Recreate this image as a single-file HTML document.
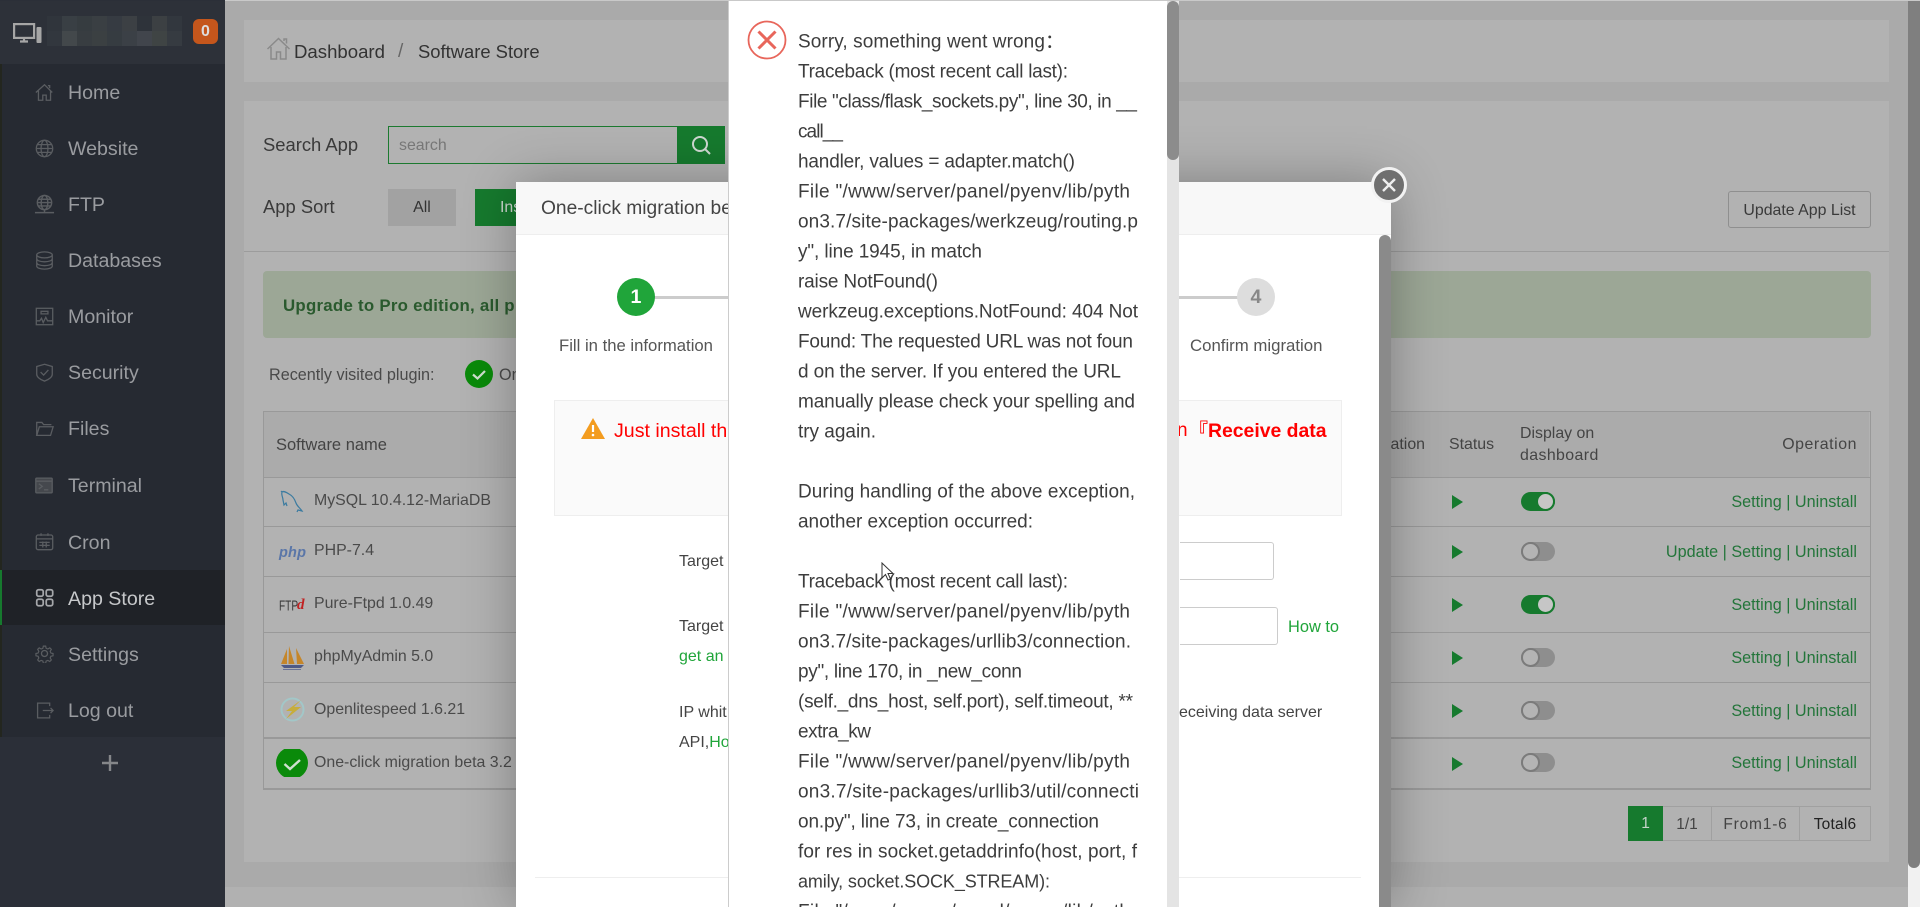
<!DOCTYPE html>
<html><head><meta charset="utf-8"><title>Software Store</title>
<style>
html,body{margin:0;padding:0;width:1920px;height:907px;overflow:hidden;background:#aaa}
body{position:relative;font-family:"Liberation Sans","Noto Sans CJK SC",sans-serif;color:#333}
.a{position:absolute}
.t{position:absolute;white-space:nowrap;line-height:24px;height:24px}
.nav{color:#9a9ca0;font-size:19.6px;left:68px}
.ic{position:absolute;left:35px;width:19px;height:19px;fill:none;stroke:#5a5d61;stroke-width:1.5}
.row{color:#4a4a4a;font-size:15.9px;left:314px}
.op{color:#23753a;font-size:16.2px;right:63px}
.play{position:absolute;left:1452px;width:0;height:0;border-left:11px solid #167a2e;border-top:7px solid transparent;border-bottom:7px solid transparent}
.tg{position:absolute;left:1521px;width:34px;height:19px;border-radius:10px;background:#8e8e8e}
.tg i{position:absolute;left:0;top:0;width:15px;height:15px;border:2px solid #7b7b7b;border-radius:50%;background:#b4b4b4}
.tg.on{background:#167a2e}
.tg.on i{left:15px;border-color:#167a2e;background:#c6c6c6}
.h{position:absolute;left:264px;width:1115px;height:1px;background:#999}
.h2{position:absolute;left:1391px;width:479px;height:1px;background:#999}
.m{color:#444;font-size:16px}
#err text{font-size:19px;fill:#3d3d3d}
</style></head><body>

<!-- top strip -->
<div class="a" style="left:0;top:0;width:1920px;height:1px;background:#c9c9c9"></div>

<!-- sidebar -->
<div class="a" style="left:0;top:0;width:225px;height:907px;background:#2b2f38"></div>
<div class="a" style="left:0;top:1px;width:225px;height:63px;background:#2d3139"></div>
<div class="a" style="left:0;top:64px;width:225px;height:673px;background:#262a32"></div>
<div class="a" style="left:0;top:64px;width:2px;height:673px;background:#23261f"></div>
<div class="a" style="left:0;top:570px;width:225px;height:55px;background:#1f2227"></div>
<div class="a" style="left:0;top:570px;width:2px;height:55px;background:#167a2e"></div>

<!-- logo -->
<svg class="a" style="left:13px;top:23px" width="29" height="21" viewBox="0 0 29 21" fill="none" stroke="#a6a6a6" stroke-width="2.200"><rect x="1.100" y="1.100" width="20" height="13.800"/><path d="M7 18.500h8M11 15v3"/><rect x="23.500" y="4" width="5" height="16" rx="1" fill="#a6a6a6" stroke="none"/></svg>
<!-- mosaic -->
<div class="a" style="left:47px;top:16px;width:135px;height:30px;display:grid;grid-template-columns:repeat(9,15px);grid-template-rows:15px 15px">
<i style="background:#30353c"></i><i style="background:#393f44"></i><i style="background:#363c40"></i><i style="background:#3a3f43"></i><i style="background:#363b42"></i><i style="background:#3c4044"></i><i style="background:#2e333a"></i><i style="background:#3c4043"></i><i style="background:#32373e"></i>
<i style="background:#32373e"></i><i style="background:#43484b"></i><i style="background:#383d41"></i><i style="background:#3b4042"></i><i style="background:#363c41"></i><i style="background:#3b4046"></i><i style="background:#41454c"></i><i style="background:#3f4444"></i><i style="background:#363b41"></i>
</div>
<div class="a" style="left:193px;top:19px;width:25px;height:25px;background:#c4561c;border-radius:6px;color:#ddd;font-weight:bold;font-size:16px;line-height:25px;text-align:center">0</div>

<!-- nav -->
<svg class="ic" style="top:83px" viewBox="0 0 22 22"><path d="M1 11 11 2l9 9M4 9v11h5v-6h4v6h5V9M15 3h2v3"/></svg>
<span class="t nav" style="top:81px">Home</span>
<svg class="ic" style="top:139px" viewBox="0 0 22 22"><circle cx="11" cy="11" r="9.500"/><ellipse cx="11" cy="11" rx="4" ry="9.500"/><path d="M2 11h18M3 6.500h16M3 15.500h16"/></svg>
<span class="t nav" style="top:137px">Website</span>
<svg class="ic" style="left:34px;top:194px;width:21px;height:21px" viewBox="0 0 22 22"><circle cx="11" cy="9" r="7.500"/><ellipse cx="11" cy="9" rx="3.500" ry="7.500"/><path d="M3.500 9h15M4 5.500h14M4 12.500h14M1 19.500h20M11 16.500v3"/></svg>
<span class="t nav" style="top:193px">FTP</span>
<svg class="ic" style="top:251px" viewBox="0 0 22 22"><ellipse cx="11" cy="4.500" rx="9" ry="3.500"/><path d="M2 4.500v13c0 2 4 3.500 9 3.500s9-1.500 9-3.500v-13M2 9c0 2 4 3.500 9 3.500s9-1.500 9-3.500M2 13.500c0 2 4 3.500 9 3.500s9-1.500 9-3.500"/></svg>
<span class="t nav" style="top:249px">Databases</span>
<svg class="ic" style="top:307px" viewBox="0 0 22 22"><rect x="1.500" y="1.500" width="19" height="19"/><path d="M1.500 16h4l2-3 2 5 3-6 2 4h6M7 5h8v3H7z"/></svg>
<span class="t nav" style="top:305px">Monitor</span>
<svg class="ic" style="top:362px;height:21px" viewBox="0 0 22 22"><path d="M11 1.500 20 4v9c0 3.500-4 6-9 8-5-2-9-4.500-9-8V4z"/><path d="M6.500 10.500 10 14l5.500-6"/></svg>
<span class="t nav" style="top:361px">Security</span>
<svg class="ic" style="top:419px" viewBox="0 0 22 22"><path d="M2 19V4h6l2 2.500h9M2 19h16l3-10H5z"/></svg>
<span class="t nav" style="top:417px">Files</span>
<svg class="ic" style="left:34px;top:476px;width:20px" viewBox="0 0 22 22"><rect x="1.500" y="2.500" width="19" height="17" rx="1" fill="#45484d"/><path d="M5 9l4 3-4 3M11 16h5M2 6h18"/></svg>
<span class="t nav" style="top:474px">Terminal</span>
<svg class="ic" style="top:532px" viewBox="0 0 22 22"><rect x="1.500" y="3.500" width="19" height="17" rx="2"/><path d="M7 1.500v3M15 1.500v3M1.500 8h19M5 12h12M5 15.500h12M9 11v7M13 11v7"/></svg>
<span class="t nav" style="top:531px">Cron</span>
<svg class="ic" style="top:588px;stroke:#a5a7aa;stroke-width:2" viewBox="0 0 22 22"><rect x="2" y="2" width="7.500" height="7.500" rx="2"/><rect x="13" y="2" width="7.500" height="7.500" rx="2"/><rect x="2" y="13" width="7.500" height="7.500" rx="2"/><rect x="13" y="13" width="7.500" height="7.500" rx="2"/></svg>
<span class="t nav" style="top:587px;color:#c6c8ca">App Store</span>
<svg class="ic" style="top:644px" viewBox="0 0 22 22"><circle cx="11" cy="11" r="3.500"/><path d="M9.500 1.500h3l.6 2.800 2.200.9 2.500-1.500 2 2-1.500 2.500.9 2.200 2.800.6v3l-2.800.6-.9 2.200 1.500 2.500-2 2-2.500-1.500-2.200.9-.6 2.800h-3l-.6-2.800-2.200-.9-2.500 1.500-2-2 1.500-2.500-.9-2.200-2.800-.6v-3l2.800-.6.9-2.200-1.500-2.500 2-2 2.500 1.500 2.200-.9z" transform="translate(1.100 1.100) scale(.9)"/></svg>
<span class="t nav" style="top:643px">Settings</span>
<svg class="ic" style="top:701px" viewBox="0 0 22 22"><path d="M17 6V2.500H3v17h14V16M9 11h12M18 8l3 3-3 3"/></svg>
<span class="t nav" style="top:699px">Log out</span>
<svg class="a" style="left:101px;top:754px" width="18" height="18" viewBox="0 0 18 18"><path d="M9 1v16M1 9h16" stroke="#85878a" stroke-width="2.400"/></svg>

<!-- main -->
<div class="a" style="left:225px;top:1px;width:1683px;height:886px;background:#aaa"></div>
<div class="a" style="left:225px;top:887px;width:1683px;height:20px;background:#b1b1b1"></div>

<!-- breadcrumb -->
<div class="a" style="left:244px;top:20px;width:1645px;height:62px;background:#b2b2b2"></div>
<svg class="a" style="left:266px;top:36px" width="25" height="25" viewBox="0 0 25 25" fill="none" stroke="#8a8a8a" stroke-width="1.500"><path d="M1.500 13 12.500 2.500l11 10.500M5 11v12h5.500v-7h4v7H20V11M18 5V3h2.500v4.500"/></svg>
<span class="t" style="left:294px;top:40px;font-size:18.6px;color:#333">Dashboard</span>
<span class="t" style="left:398px;top:40px;font-size:19px;color:#666">/</span>
<span class="t" style="left:418px;top:40px;font-size:18.4px;color:#333">Software Store</span>

<!-- card -->
<div class="a" style="left:244px;top:101px;width:1645px;height:761px;background:#b2b2b2"></div>
<div class="a" style="left:244px;top:251px;width:1645px;height:1px;background:#9c9c9c"></div>

<span class="t" style="left:263px;top:133px;font-size:18.4px;color:#3a3a3a">Search App</span>
<div class="a" style="left:388px;top:126px;width:289px;height:36px;border:1px solid #1c7a30;background:#b2b2b2"></div>
<span class="t" style="left:399px;top:134px;font-size:15.9px;color:#777">search</span>
<div class="a" style="left:677px;top:126px;width:48px;height:38px;background:#167a2e"></div>
<svg class="a" style="left:690px;top:134px" width="22" height="22" viewBox="0 0 22 22" fill="none" stroke="#cfd8d1" stroke-width="2"><circle cx="10" cy="10" r="7"/><path d="M15 15l5 5"/></svg>
<span class="t" style="left:263px;top:195px;font-size:18.4px;color:#3a3a3a">App Sort</span>
<div class="a" style="left:388px;top:189px;width:68px;height:37px;background:#a2a2a2;text-align:center;line-height:37px;font-size:15.9px;color:#333">All</div>
<div class="a" style="left:475px;top:189px;width:60px;height:37px;background:#167a2e;line-height:37px;font-size:15.9px;color:#cfd8d1;padding-left:25px">Installed</div>
<div class="a" style="left:1728px;top:191px;width:141px;height:35px;border:1px solid #8f8f8f;border-radius:3px;text-align:center;line-height:37px;font-size:15.9px;color:#3a3a3a">Update App List</div>

<div class="a" style="left:263px;top:271px;width:1608px;height:67px;background:#9ca796;border-radius:4px"></div>
<span class="t" style="left:283px;top:294px;font-size:16.85px;font-weight:bold;color:#2a5a2e;letter-spacing:.25px">Upgrade to Pro edition, all p</span>

<span class="t" style="left:269px;top:363px;font-size:16.2px;color:#4a4a4a">Recently visited plugin:</span>
<svg class="a" style="left:465px;top:360px" width="28" height="28" viewBox="0 0 28 28"><circle cx="14" cy="14" r="14" fill="#0a8a0a"/><path d="M8 14.500l4.500 4L20 11" fill="none" stroke="#cfe0cf" stroke-width="2.200"/></svg>
<span class="t" style="left:499px;top:363px;font-size:16.2px;color:#4a4a4a">On</span>

<!-- table -->
<div class="a" style="left:263px;top:411px;width:1606px;height:376px;border:1px solid #999;border-bottom:2px solid #999"></div>
<div class="a" style="left:264px;top:412px;width:1605px;height:65px;background:#ababab"></div>
<div class="h" style="top:477px"></div><div class="h2" style="top:477px"></div>
<div class="h" style="top:526px"></div><div class="h2" style="top:526px"></div>
<div class="h" style="top:576px"></div><div class="h2" style="top:576px"></div>
<div class="h" style="top:632px"></div><div class="h2" style="top:632px"></div>
<div class="h" style="top:682px"></div><div class="h2" style="top:682px"></div>
<div class="h" style="top:737px;height:2px"></div><div class="h2" style="top:737px;height:2px"></div>

<span class="t" style="left:276px;top:433px;font-size:16.5px;color:#444">Software name</span>
<span class="t" style="left:1391px;top:433px;width:34px;overflow:hidden;font-size:15.9px;color:#444;direction:rtl">ation</span>
<span class="t" style="left:1449px;top:433px;font-size:15.9px;color:#444">Status</span>
<span class="t" style="left:1520px;top:422px;font-size:15.9px;color:#444">Display on</span>
<span class="t" style="left:1520px;top:444px;font-size:15.9px;color:#444;letter-spacing:.4px">dashboard</span>
<span class="t" style="right:63px;top:433px;font-size:15.9px;color:#444;letter-spacing:.55px">Operation</span>

<span class="t row" style="top:489px">MySQL 10.4.12-MariaDB</span>
<span class="t row" style="top:539px">PHP-7.4</span>
<span class="t row" style="top:592px">Pure-Ftpd 1.0.49</span>
<span class="t row" style="top:645px">phpMyAdmin 5.0</span>
<span class="t row" style="top:698px">Openlitespeed 1.6.21</span>
<span class="t row" style="top:751px">One-click migration beta 3.2</span>

<!-- row icons -->
<svg class="a" style="left:280px;top:490px" width="24" height="23" viewBox="0 0 24 23" fill="none" stroke="#3b7ba0" stroke-width="1.200"><path d="M2 2c1-1 4 0 7 2 4 2 6 6 7 9 1 3 4 5 6 8l-4-1-1 2M2 2c-1 3 1 5 1 8l1 5 2-2 1 3M2 2l-1-1"/></svg>
<span class="t" style="left:279px;top:541px;font-size:14.5px;font-weight:bold;font-style:italic;color:#5a76a8;letter-spacing:.2px">php</span>
<span class="t" style="left:279px;top:593px;width:20px;font-size:14px;color:#3a3a3a;transform-origin:left;transform:scale(.72,1.05)">FTP</span>
<span class="t" style="left:297px;top:593px;font-size:15px;font-style:italic;font-weight:bold;color:#c02020;font-family:'Liberation Serif',serif">d</span>
<svg class="a" style="left:280px;top:646px" width="25" height="25" viewBox="0 0 25 25"><path d="M7 3 1 18h6zM9 0 8.500 18h6zM16 2l1 16h7z" fill="#c5862a"/><path d="M1 19h23l-3 3H4z" fill="#4f5a86"/><path d="M3 23.500h18" stroke="#6a7396"/></svg>
<svg class="a" style="left:280px;top:697px" width="25" height="25" viewBox="0 0 25 25"><circle cx="12.500" cy="12.500" r="11" fill="none" stroke="#a2c7c8" stroke-width="2"/><path d="M21 3 6 14h6L6 22 21 10h-7z" fill="#c7ad3b"/></svg>
<svg class="a" style="left:276px;top:749px" width="32" height="28" viewBox="0 0 32 28"><circle cx="16" cy="14" r="16" fill="#0a8a0a"/><path d="M8.500 15l5.500 5 10-9" fill="none" stroke="#cfe0cf" stroke-width="2.400"/></svg>

<!-- play, toggles, ops -->
<div class="play" style="top:495px"></div><div class="tg on" style="top:492px"><i></i></div>
<span class="t op" style="top:490px">Setting | Uninstall</span>
<div class="play" style="top:545px"></div><div class="tg" style="top:542px"><i></i></div>
<span class="t op" style="top:540px">Update | Setting | Uninstall</span>
<div class="play" style="top:598px"></div><div class="tg on" style="top:595px"><i></i></div>
<span class="t op" style="top:593px">Setting | Uninstall</span>
<div class="play" style="top:651px"></div><div class="tg" style="top:648px"><i></i></div>
<span class="t op" style="top:646px">Setting | Uninstall</span>
<div class="play" style="top:704px"></div><div class="tg" style="top:701px"><i></i></div>
<span class="t op" style="top:699px">Setting | Uninstall</span>
<div class="play" style="top:757px"></div><div class="tg" style="top:753px"><i></i></div>
<span class="t op" style="top:751px">Setting | Uninstall</span>

<!-- pagination -->
<div class="a" style="left:1628px;top:806px;width:243px;height:35px;display:flex;font-size:15.5px;line-height:35px;text-align:center;color:#444;box-sizing:border-box">
<div style="width:35px;background:#167a2e;color:#c6d4ca;line-height:35px">1</div>
<div style="width:49px;border:1px solid #a0a0a0;border-left:0;box-sizing:border-box">1/1</div>
<div style="width:88px;border:1px solid #a0a0a0;border-left:0;box-sizing:border-box;letter-spacing:.8px">From1-6</div>
<div style="width:71px;border:1px solid #a0a0a0;border-left:0;box-sizing:border-box;color:#222;letter-spacing:.2px">Total6</div>
</div>

<!-- page scrollbar -->
<div class="a" style="left:1908px;top:1px;width:12px;height:906px;background:#f1f1f1"></div>
<div class="a" style="left:1908px;top:1px;width:12px;height:867px;background:#7f7f7f;border-radius:0 0 6px 6px"></div>

<!-- migration modal -->
<div class="a" style="left:516px;top:182px;width:875px;height:725px;background:#fff;box-shadow:1px 1px 50px rgba(0,0,0,.3)"></div>
<div class="a" style="left:516px;top:182px;width:875px;height:52px;background:#f8f8f8;border-bottom:1px solid #eee"></div>
<span class="t" style="left:541px;top:197px;font-size:19.2px;color:#444">One-click migration beta</span>
<div class="a" style="left:1379px;top:235px;width:12px;height:672px;background:#8a8a8a;border-radius:6px 6px 0 0"></div>

<div class="a" style="left:636px;top:296px;width:620px;height:3px;background:#ccc"></div>
<div class="a" style="left:617px;top:278px;width:38px;height:38px;border-radius:50%;background:#20a53a;color:#fff;font-weight:bold;font-size:19.600px;line-height:38px;text-align:center">1</div>
<div class="a" style="left:1237px;top:278px;width:38px;height:38px;border-radius:50%;background:#ddd;color:#888;font-weight:bold;font-size:19.600px;line-height:38px;text-align:center">4</div>
<span class="t" style="left:559px;top:334px;font-size:16.7px;color:#555">Fill in the information</span>
<span class="t" style="left:1190px;top:334px;font-size:16.8px;color:#555">Confirm migration</span>

<div class="a" style="left:554px;top:400px;width:786px;height:114px;background:#fafafa;border:1px solid #eee"></div>
<svg class="a" style="left:581px;top:418px" width="24" height="21" viewBox="0 0 24 21"><path d="M12 0 24 21H0z" fill="#f39c1f"/><path d="M12 7v7" stroke="#fff" stroke-width="2.200"/><circle cx="12" cy="17" r="1.300" fill="#fff"/></svg>
<span class="t" style="left:614px;top:419px;font-size:19.6px;color:#f00">Just install the</span>
<span class="t" style="left:1177px;top:419px;font-size:19px;color:#f00">n</span>
<span class="t" style="left:1188.600px;top:419px;font-size:19.4px;font-weight:bold;color:#f00">『Receive data</span>

<span class="t m" style="left:679px;top:550px">Target</span>
<span class="t m" style="left:679px;top:615px">Target</span>
<span class="t m" style="left:679px;top:645px;color:#20a53a">get an</span>
<span class="t m" style="left:679px;top:701px">IP whit</span>
<span class="t m" style="left:679px;top:731px">API,<span style="color:#20a53a">Ho</span></span>
<div class="a" style="left:1180px;top:542px;width:93px;height:36px;border:1px solid #ccc;border-left:0;border-radius:0 3px 3px 0"></div>
<div class="a" style="left:1180px;top:607px;width:97px;height:36px;border:1px solid #ccc;border-left:0;border-radius:0 3px 3px 0"></div>
<span class="t m" style="left:1288px;top:615px;color:#20a53a;font-size:16.4px">How to</span>
<span class="t m" style="left:1179px;top:701px">eceiving data server</span>
<div class="a" style="left:535px;top:877px;width:826px;height:1px;background:#eee"></div>

<!-- close -->
<div class="a" style="left:1371px;top:167px;width:36px;height:36px;box-sizing:border-box;border:3px solid #f2f2f2;border-radius:50%;background:#6f6f6f"></div>
<svg class="a" style="left:1381px;top:177px" width="16" height="16" viewBox="0 0 16 16"><path d="M2 2l12 12M14 2 2 14" stroke="#eee" stroke-width="2.400"/></svg>

<!-- error dialog -->
<div class="a" style="left:728px;top:1px;width:451px;height:906px;background:#fff;border-left:1px solid #ccc;box-sizing:border-box;overflow:hidden"></div>
<div class="a" style="left:1167px;top:1px;width:12px;height:906px;background:#e4e4e4"></div>
<div class="a" style="left:1167px;top:1px;width:12px;height:159px;background:#8c8c8c;border-radius:6px"></div>
<svg class="a" style="left:747px;top:20px" width="40" height="40" viewBox="0 0 40 40" fill="none" stroke="#e8665b"><circle cx="20" cy="20" r="18.500" stroke-width="1.800"/><path d="M11.500 11.500l17 17M28.500 11.500l-17 17" stroke-width="3"/></svg>
<svg id="err" class="a" style="left:0;top:0" width="1167" height="907">
<text x="798" y="47.500" textLength="266">Sorry, something went wrong：</text>
<text x="798" y="77.500" textLength="270">Traceback (most recent call last):</text>
<text x="798" y="107.500" textLength="339">File "class/flask_sockets.py", line 30, in __</text>
<text x="798" y="137.500" textLength="45">call__</text>
<text x="798" y="167.500" textLength="277">handler, values = adapter.match()</text>
<text x="798" y="197.500" textLength="332">File "/www/server/panel/pyenv/lib/pyth</text>
<text x="798" y="227.500" textLength="340">on3.7/site-packages/werkzeug/routing.p</text>
<text x="798" y="257.500" textLength="184">y", line 1945, in match</text>
<text x="798" y="287.500" textLength="140">raise NotFound()</text>
<text x="798" y="317.500" textLength="340">werkzeug.exceptions.NotFound: 404 Not</text>
<text x="798" y="347.500" textLength="335">Found: The requested URL was not foun</text>
<text x="798" y="377.500" textLength="323">d on the server. If you entered the URL</text>
<text x="798" y="407.500" textLength="337">manually please check your spelling and</text>
<text x="798" y="437.500" textLength="78">try again.</text>
<text x="798" y="497.500" textLength="337">During handling of the above exception,</text>
<text x="798" y="527.500" textLength="235">another exception occurred:</text>
<text x="798" y="587.500" textLength="270">Traceback (most recent call last):</text>
<text x="798" y="617.500" textLength="332">File "/www/server/panel/pyenv/lib/pyth</text>
<text x="798" y="647.500" textLength="333">on3.7/site-packages/urllib3/connection.</text>
<text x="798" y="677.500" textLength="224">py", line 170, in _new_conn</text>
<text x="798" y="707.500" textLength="335">(self._dns_host, self.port), self.timeout, **</text>
<text x="798" y="737.500" textLength="73">extra_kw</text>
<text x="798" y="767.500" textLength="332">File "/www/server/panel/pyenv/lib/pyth</text>
<text x="798" y="797.500" textLength="341">on3.7/site-packages/urllib3/util/connecti</text>
<text x="798" y="827.500" textLength="301">on.py", line 73, in create_connection</text>
<text x="798" y="857.500" textLength="339">for res in socket.getaddrinfo(host, port, f</text>
<text x="798" y="887.500" textLength="252" style="font-size:18px">amily, socket.SOCK_STREAM):</text>
<text x="798" y="917.500" textLength="332">File "/www/server/panel/pyenv/lib/pyth</text>
</svg>

<!-- cursor -->
<svg class="a" style="left:881px;top:562px" width="14" height="20" viewBox="0 0 14 20"><path d="M1 1v15l3.500-3.500L7 18l2.500-1-2.500-5.500h5z" fill="#fff" stroke="#333" stroke-width="1"/></svg>

</body></html>
